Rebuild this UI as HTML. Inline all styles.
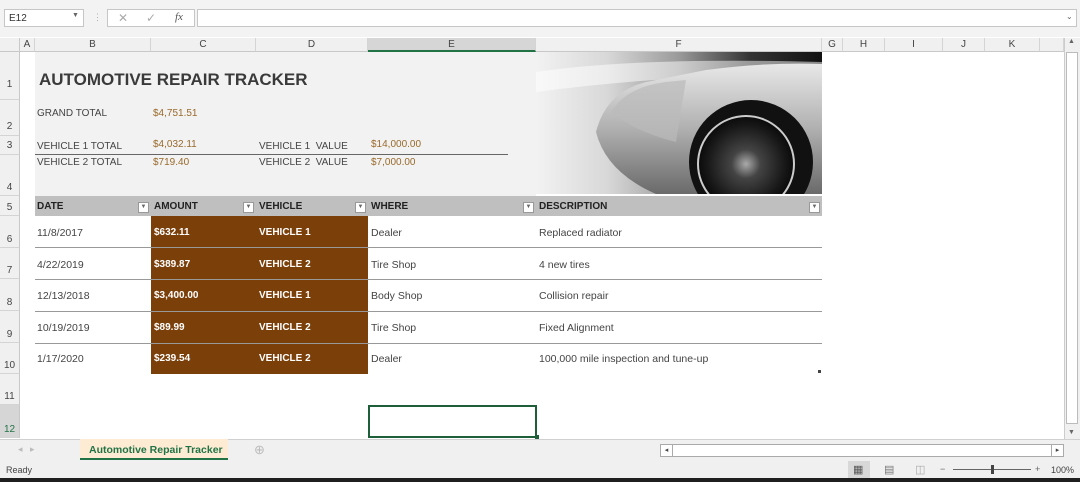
<!DOCTYPE html><html><head><style>
*{margin:0;padding:0;box-sizing:border-box}
body{width:1080px;height:482px;overflow:hidden;background:#fff;font-family:"Liberation Sans",sans-serif;position:relative;font-size:10.5px;color:#444}
.a{position:absolute}
.t{position:absolute;white-space:nowrap}
.ch{position:absolute;top:38px;height:14px;background:#f0f0f0;border-right:1px solid #d4d4d4;border-bottom:1px solid #c8c8c8;text-align:center;font-size:10px;color:#444;line-height:13px}
.rh{position:absolute;left:0;width:20px;background:#f0f0f0;border-bottom:1px solid #d4d4d4;border-right:1px solid #c8c8c8;font-size:10px;text-align:center;color:#444}
.hd{font-weight:bold;font-size:10px;color:#222}
.dd{position:absolute;width:11px;height:11px;background:#fff;border:1px solid #999;top:202px;font-size:6px;text-align:center;line-height:9px;color:#666}
.br{background:#7b3f0a;position:absolute;left:151px;width:217px;height:31px}
.w{color:#fff;font-weight:bold;font-size:10px}
.g{color:#9a6a2a}
.s{font-size:10px}
</style></head><body>
<div class="a" style="left:0;top:0;width:1080px;height:37px;background:#f3f3f3"></div>
<div class="a" style="left:4px;top:9px;width:80px;height:18px;background:#fff;border:1px solid #c6c6c6"></div>
<div class="t" style="left:9px;top:13px;font-size:10px;color:#333">E12</div>
<div class="t" style="left:72px;top:12px;font-size:7px;color:#666">▼</div>
<div class="t" style="left:93px;top:12px;font-size:9px;color:#aaa">⋮</div>
<div class="a" style="left:107px;top:9px;width:88px;height:18px;background:#fff;border:1px solid #c6c6c6"></div>
<div class="t" style="left:118px;top:11px;font-size:12px;color:#aaa">✕</div>
<div class="t" style="left:146px;top:11px;font-size:12px;color:#aaa">✓</div>
<div class="t" style="left:175px;top:11px;font-size:11px;font-style:italic;color:#555;font-family:'Liberation Serif',serif">fx</div>
<div class="a" style="left:197px;top:9px;width:880px;height:18px;background:#fff;border:1px solid #c6c6c6"></div>
<div class="t" style="left:1066px;top:12px;font-size:8px;color:#666">⌄</div>
<div class="a" style="left:0;top:38px;width:20px;height:14px;background:#f0f0f0;border-right:1px solid #c8c8c8;border-bottom:1px solid #c8c8c8"></div>
<div class="ch" style="left:20px;width:15px">A</div>
<div class="ch" style="left:35px;width:116px">B</div>
<div class="ch" style="left:151px;width:105px">C</div>
<div class="ch" style="left:256px;width:112px">D</div>
<div class="ch" style="left:368px;width:168px;background:#d6d6d6;border-bottom:2px solid #217346">E</div>
<div class="ch" style="left:536px;width:286px">F</div>
<div class="ch" style="left:822px;width:21px">G</div>
<div class="ch" style="left:843px;width:42px">H</div>
<div class="ch" style="left:885px;width:58px">I</div>
<div class="ch" style="left:943px;width:42px">J</div>
<div class="ch" style="left:985px;width:55px">K</div>
<div class="ch" style="left:1040px;width:24px"></div>
<div class="rh" style="top:52px;height:48px;padding-top:27px">1</div>
<div class="rh" style="top:100px;height:36px;padding-top:21px">2</div>
<div class="rh" style="top:136px;height:19px;padding-top:4px">3</div>
<div class="rh" style="top:155px;height:41px;padding-top:27px">4</div>
<div class="rh" style="top:196px;height:20px;padding-top:6px">5</div>
<div class="rh" style="top:216px;height:32px;padding-top:18px">6</div>
<div class="rh" style="top:248px;height:31px;padding-top:17px">7</div>
<div class="rh" style="top:279px;height:32px;padding-top:18px">8</div>
<div class="rh" style="top:311px;height:32px;padding-top:18px">9</div>
<div class="rh" style="top:343px;height:31px;padding-top:17px">10</div>
<div class="rh" style="top:374px;height:31px;padding-top:17px">11</div>
<div class="rh" style="top:405px;height:33px;padding-top:19px;background:#d6d6d6;color:#217346">12</div>
<!-- title area -->
<div class="a" style="left:35px;top:52px;width:501px;height:144px;background:#f2f2f2"></div>
<svg class="a" style="left:536px;top:52px" width="286" height="142" viewBox="0 0 286 142">
<defs>
<linearGradient id="bg" x1="0" x2="1"><stop offset="0" stop-color="#f2f2f2"/><stop offset=".25" stop-color="#d8d8d8"/><stop offset=".5" stop-color="#9a9a9a"/><stop offset=".75" stop-color="#333"/><stop offset="1" stop-color="#111"/></linearGradient>
<linearGradient id="car" x1="0" y1="0" x2="0" y2="1"><stop offset="0" stop-color="#e8e8e8"/><stop offset=".5" stop-color="#b0b0b0"/><stop offset="1" stop-color="#6a6a6a"/></linearGradient>
<radialGradient id="wh"><stop offset="0" stop-color="#aaa"/><stop offset=".3" stop-color="#444"/><stop offset=".8" stop-color="#181818"/><stop offset="1" stop-color="#0a0a0a"/></radialGradient>
</defs>
<rect width="286" height="142" fill="url(#bg)"/>
<path d="M0 20 Q100 5 286 10 L286 25 Q150 20 0 40Z" fill="#fff" opacity=".5"/>
<path d="M60 80 Q70 40 110 30 L170 18 Q230 10 286 12 L286 142 L120 142 Q70 120 60 80Z" fill="url(#car)"/>
<path d="M75 60 Q90 35 130 30 L150 28 L140 90 Q100 80 75 60Z" fill="#bbb" opacity=".7"/>
<circle cx="215" cy="110" r="62" fill="#111"/>
<circle cx="210" cy="112" r="48" fill="url(#wh)" stroke="#ccc" stroke-width="2"/>
</svg>
<div class="t" style="left:39px;top:70px;font-size:17px;font-weight:bold;color:#3a3a3a">AUTOMOTIVE REPAIR TRACKER</div>
<div class="t s" style="left:37px;top:108px">GRAND TOTAL</div>
<div class="t g s" style="left:153px;top:108px">$4,751.51</div>
<div class="t s" style="left:37px;top:141px">VEHICLE 1 TOTAL</div>
<div class="t g s" style="left:153px;top:139px">$4,032.11</div>
<div class="t s" style="left:259px;top:141px">VEHICLE 1 &nbsp;VALUE</div>
<div class="t g s" style="left:371px;top:139px">$14,000.00</div>
<div class="a" style="left:35px;top:154px;width:473px;height:1px;background:#666"></div>
<div class="t s" style="left:37px;top:157px">VEHICLE 2 TOTAL</div>
<div class="t g s" style="left:153px;top:157px">$719.40</div>
<div class="t s" style="left:259px;top:157px">VEHICLE 2 &nbsp;VALUE</div>
<div class="t g s" style="left:371px;top:157px">$7,000.00</div>
<!-- header row -->
<div class="a" style="left:35px;top:196px;width:787px;height:20px;background:#bfbfbf"></div>
<div class="t hd" style="left:37px;top:201px">DATE</div>
<div class="t hd" style="left:154px;top:201px">AMOUNT</div>
<div class="t hd" style="left:259px;top:201px">VEHICLE</div>
<div class="t hd" style="left:371px;top:201px">WHERE</div>
<div class="t hd" style="left:539px;top:201px">DESCRIPTION</div>
<div class="dd" style="left:138px">▼</div><div class="dd" style="left:243px">▼</div><div class="dd" style="left:355px">▼</div><div class="dd" style="left:523px">▼</div><div class="dd" style="left:809px">▼</div>
<!-- rows -->
<div class="br" style="top:216px"></div><div class="br" style="top:248px"></div><div class="br" style="top:280px"></div><div class="br" style="top:312px"></div><div class="br" style="top:344px;height:30px"></div>
<div class="a" style="left:35px;top:247px;width:787px;height:1px;background:#999"></div>
<div class="a" style="left:35px;top:279px;width:787px;height:1px;background:#999"></div>
<div class="a" style="left:35px;top:311px;width:787px;height:1px;background:#999"></div>
<div class="a" style="left:35px;top:343px;width:787px;height:1px;background:#999"></div>
<div class="t" style="left:37px;top:227px">11/8/2017</div><div class="t w" style="left:154px;top:227px">$632.11</div><div class="t w" style="left:259px;top:227px">VEHICLE 1</div><div class="t" style="left:371px;top:227px">Dealer</div><div class="t" style="left:539px;top:227px">Replaced radiator</div>
<div class="t" style="left:37px;top:259px">4/22/2019</div><div class="t w" style="left:154px;top:259px">$389.87</div><div class="t w" style="left:259px;top:259px">VEHICLE 2</div><div class="t" style="left:371px;top:259px">Tire Shop</div><div class="t" style="left:539px;top:259px">4 new tires</div>
<div class="t" style="left:37px;top:290px">12/13/2018</div><div class="t w" style="left:154px;top:290px">$3,400.00</div><div class="t w" style="left:259px;top:290px">VEHICLE 1</div><div class="t" style="left:371px;top:290px">Body Shop</div><div class="t" style="left:539px;top:290px">Collision repair</div>
<div class="t" style="left:37px;top:322px">10/19/2019</div><div class="t w" style="left:154px;top:322px">$89.99</div><div class="t w" style="left:259px;top:322px">VEHICLE 2</div><div class="t" style="left:371px;top:322px">Tire Shop</div><div class="t" style="left:539px;top:322px">Fixed Alignment</div>
<div class="t" style="left:37px;top:353px">1/17/2020</div><div class="t w" style="left:154px;top:353px">$239.54</div><div class="t w" style="left:259px;top:353px">VEHICLE 2</div><div class="t" style="left:371px;top:353px">Dealer</div><div class="t" style="left:539px;top:353px">100,000 mile inspection and tune-up</div>
<div class="a" style="left:818px;top:370px;width:3px;height:3px;background:#444"></div>
<div class="a" style="left:368px;top:405px;width:169px;height:33px;border:2px solid #1e5e38"></div>
<div class="a" style="left:535px;top:435px;width:4px;height:4px;background:#1e5e38"></div>
<!-- v scroll -->
<div class="a" style="left:1064px;top:38px;width:16px;height:402px;background:#f0f0f0;border-left:1px solid #ccc"></div>
<div class="a" style="left:1066px;top:52px;width:12px;height:372px;background:#fff;border:1px solid #bbb"></div>
<div class="t" style="left:1068px;top:38px;font-size:7px;color:#666">▲</div>
<div class="t" style="left:1068px;top:429px;font-size:7px;color:#666">▼</div>
<!-- tabs -->
<div class="a" style="left:0;top:439px;width:1080px;height:22px;background:#f0f0f0;border-top:1px solid #d0d0d0"></div>
<div class="t" style="left:18px;top:444px;font-size:9px;color:#bbb">◂ &nbsp; ▸</div>
<div class="a" style="left:80px;top:439px;width:148px;height:21px;background:#fdebd3;border-bottom:2px solid #217346"></div>
<div class="t" style="left:89px;top:444px;font-size:10.5px;font-weight:bold;color:#217346">Automotive Repair Tracker</div>
<div class="t" style="left:254px;top:442px;font-size:13px;color:#bbb">⊕</div>
<div class="a" style="left:660px;top:444px;width:404px;height:13px;background:#fff;border:1px solid #aaa"></div>
<div class="a" style="left:660px;top:444px;width:13px;height:13px;border:1px solid #aaa;font-size:7px;text-align:center;line-height:11px;color:#444">◂</div>
<div class="a" style="left:1051px;top:444px;width:13px;height:13px;border:1px solid #aaa;font-size:7px;text-align:center;line-height:11px;color:#444">▸</div>
<!-- status -->
<div class="a" style="left:0;top:461px;width:1080px;height:17px;background:#f0f0f0"></div>
<div class="t" style="left:6px;top:465px;font-size:9px;color:#444">Ready</div>
<div class="a" style="left:848px;top:461px;width:22px;height:17px;background:#d8d8d8"></div>
<div class="t" style="left:853px;top:463px;font-size:11px;color:#555">▦</div>
<div class="t" style="left:884px;top:463px;font-size:11px;color:#777">▤</div>
<div class="t" style="left:915px;top:463px;font-size:11px;color:#aaa">◫</div>
<div class="t" style="left:940px;top:464px;font-size:9px;color:#666">−</div>
<div class="a" style="left:953px;top:469px;width:78px;height:1px;background:#666"></div>
<div class="a" style="left:991px;top:465px;width:3px;height:9px;background:#444"></div>
<div class="t" style="left:1035px;top:464px;font-size:9px;color:#666">+</div>
<div class="t" style="left:1051px;top:465px;font-size:9px;color:#444">100%</div>
<div class="a" style="left:0;top:478px;width:1080px;height:4px;background:#1f1f1f"></div>
</body></html>
